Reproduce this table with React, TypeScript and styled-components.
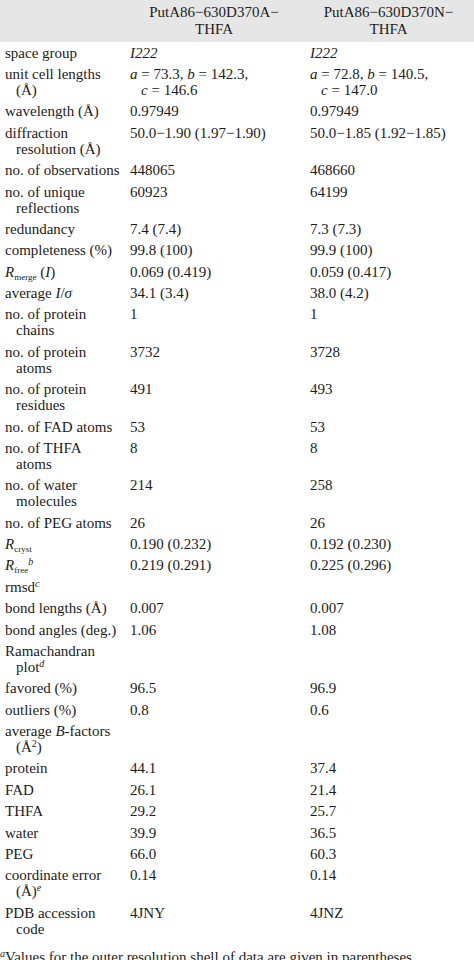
import React from 'react';
import styled, { createGlobalStyle } from 'styled-components';

const GlobalStyle = createGlobalStyle`
  html, body {
    margin: 0;
    padding: 0;
    background: #ffffff;
  }
  body {
    font-family: 'Liberation Serif', 'Times New Roman', serif;
    color: #1c1c1c;
  }
`;

const Page = styled.div`
  width: 474px;
  overflow: hidden;
`;

const Table = styled.div`
  display: grid;
  grid-template-columns: 125px 180px 169px;
  font-size: 15px;
  line-height: 16px;
`;

const HeadCell = styled.div`
  background: #e6e6e6;
  padding: 4px 7px 5px 5px;
  line-height: 16.5px;
  text-align: center;
  min-height: 32px;
`;

const Cell = styled.div`
  padding: 2.7px 4px 2.7px 5px;
  white-space: nowrap;
`;

const Line = styled.div<{ $indent?: boolean }>`
  padding-left: ${({ $indent }) => ($indent ? '11px' : '0')};
`;

const I = styled.i`
  font-style: italic;
`;

const Sub = styled.sub`
  font-size: 9px;
  vertical-align: -3px;
  line-height: 0;
`;

const Sup = styled.sup<{ $upright?: boolean }>`
  font-size: 10px;
  font-style: ${({ $upright }) => ($upright ? 'normal' : 'italic')};
  vertical-align: 5px;
  line-height: 0;
`;

const Footnote = styled.p`
  margin: 10px 0 0 0;
  font-size: 15px;
  line-height: 16px;
  white-space: nowrap;
`;

type Lines = React.ReactNode[];

type Row = {
  label: Lines;
  a: Lines;
  b: Lines;
};

const rows: Row[] = [
  { label: ['space group'], a: [<I>I222</I>], b: [<I>I222</I>] },
  {
    label: ['unit cell lengths', '(Å)'],
    a: [
      <>
        <I>a</I> = 73.3, <I>b</I> = 142.3,
      </>,
      <>
        <I>c</I> = 146.6
      </>,
    ],
    b: [
      <>
        <I>a</I> = 72.8, <I>b</I> = 140.5,
      </>,
      <>
        <I>c</I> = 147.0
      </>,
    ],
  },
  { label: ['wavelength (Å)'], a: ['0.97949'], b: ['0.97949'] },
  {
    label: ['diffraction', 'resolution (Å)'],
    a: ['50.0−1.90 (1.97−1.90)'],
    b: ['50.0−1.85 (1.92−1.85)'],
  },
  { label: ['no. of observations'], a: ['448065'], b: ['468660'] },
  { label: ['no. of unique', 'reflections'], a: ['60923'], b: ['64199'] },
  { label: ['redundancy'], a: ['7.4 (7.4)'], b: ['7.3 (7.3)'] },
  { label: ['completeness (%)'], a: ['99.8 (100)'], b: ['99.9 (100)'] },
  {
    label: [
      <>
        <I>R</I>
        <Sub>merge</Sub> (<I>I</I>)
      </>,
    ],
    a: ['0.069 (0.419)'],
    b: ['0.059 (0.417)'],
  },
  {
    label: [
      <>
        average <I>I</I>/<I>σ</I>
      </>,
    ],
    a: ['34.1 (3.4)'],
    b: ['38.0 (4.2)'],
  },
  { label: ['no. of protein', 'chains'], a: ['1'], b: ['1'] },
  { label: ['no. of protein', 'atoms'], a: ['3732'], b: ['3728'] },
  { label: ['no. of protein', 'residues'], a: ['491'], b: ['493'] },
  { label: ['no. of FAD atoms'], a: ['53'], b: ['53'] },
  { label: ['no. of THFA', 'atoms'], a: ['8'], b: ['8'] },
  { label: ['no. of water', 'molecules'], a: ['214'], b: ['258'] },
  { label: ['no. of PEG atoms'], a: ['26'], b: ['26'] },
  {
    label: [
      <>
        <I>R</I>
        <Sub>cryst</Sub>
      </>,
    ],
    a: ['0.190 (0.232)'],
    b: ['0.192 (0.230)'],
  },
  {
    label: [
      <>
        <I>R</I>
        <Sub>free</Sub>
        <Sup>b</Sup>
      </>,
    ],
    a: ['0.219 (0.291)'],
    b: ['0.225 (0.296)'],
  },
  {
    label: [
      <>
        rmsd<Sup>c</Sup>
      </>,
    ],
    a: [''],
    b: [''],
  },
  { label: ['bond lengths (Å)'], a: ['0.007'], b: ['0.007'] },
  { label: ['bond angles (deg.)'], a: ['1.06'], b: ['1.08'] },
  {
    label: [
      'Ramachandran',
      <>
        plot<Sup>d</Sup>
      </>,
    ],
    a: [''],
    b: [''],
  },
  { label: ['favored (%)'], a: ['96.5'], b: ['96.9'] },
  { label: ['outliers (%)'], a: ['0.8'], b: ['0.6'] },
  {
    label: [
      <>
        average <I>B</I>-factors
      </>,
      <>
        (Å<Sup $upright>2</Sup>)
      </>,
    ],
    a: [''],
    b: [''],
  },
  { label: ['protein'], a: ['44.1'], b: ['37.4'] },
  { label: ['FAD'], a: ['26.1'], b: ['21.4'] },
  { label: ['THFA'], a: ['29.2'], b: ['25.7'] },
  { label: ['water'], a: ['39.9'], b: ['36.5'] },
  { label: ['PEG'], a: ['66.0'], b: ['60.3'] },
  {
    label: [
      'coordinate error',
      <>
        (Å)<Sup>e</Sup>
      </>,
    ],
    a: ['0.14'],
    b: ['0.14'],
  },
  { label: ['PDB accession', 'code'], a: ['4JNY'], b: ['4JNZ'] },
];

const renderLines = (lines: Lines) =>
  lines.map((line, i) => (
    <Line key={i} $indent={i > 0}>
      {line === '' ? '\u00a0' : line}
    </Line>
  ));

export default function App() {
  return (
    <Page>
      <GlobalStyle />
      <Table>
        <HeadCell />
        <HeadCell>
          PutA86−630D370A−
          <br />
          THFA
        </HeadCell>
        <HeadCell>
          PutA86−630D370N−
          <br />
          THFA
        </HeadCell>
        {rows.map((row, i) => (
          <React.Fragment key={i}>
            <Cell>{renderLines(row.label)}</Cell>
            <Cell>{renderLines(row.a)}</Cell>
            <Cell>{renderLines(row.b)}</Cell>
          </React.Fragment>
        ))}
      </Table>
      <Footnote>
        <Sup>a</Sup>Values for the outer resolution shell of data are given in
        parentheses.
      </Footnote>
    </Page>
  );
}
